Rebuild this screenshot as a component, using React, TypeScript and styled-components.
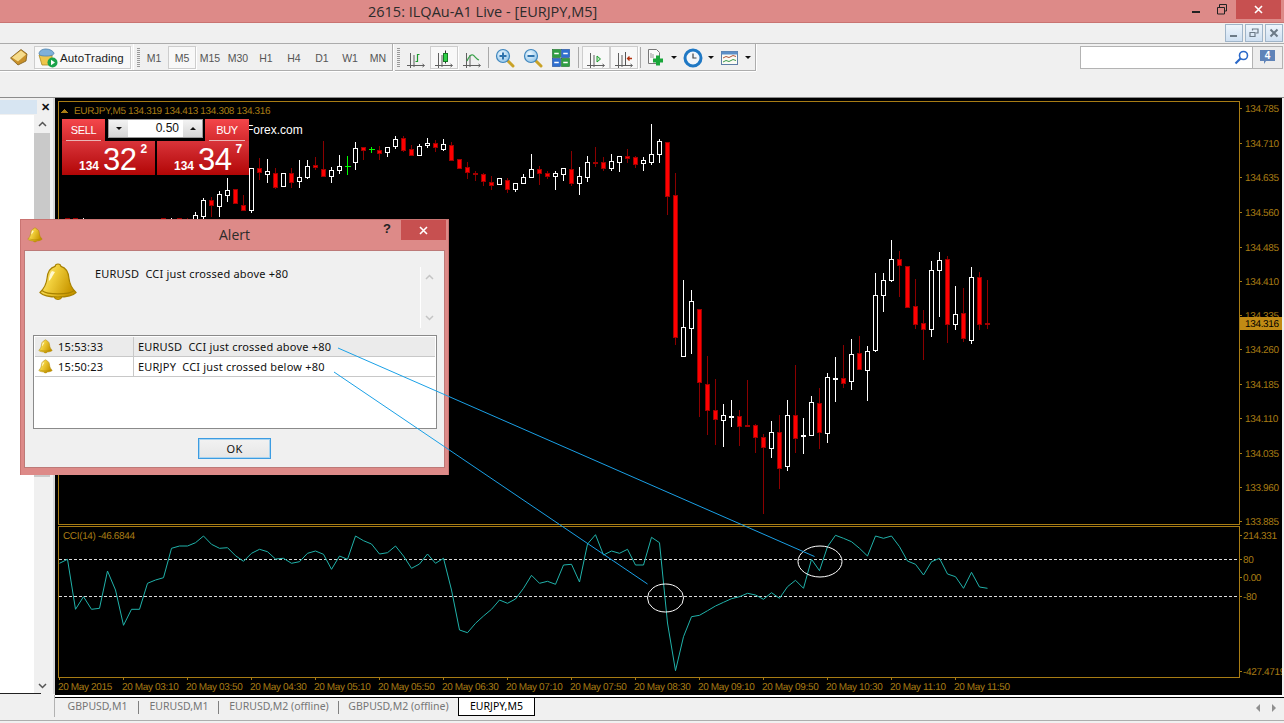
import React from 'react';
import styled, { createGlobalStyle } from 'styled-components';

const UI_FONT = '"Liberation Sans", Arial, sans-serif';
const DIALOG_FONT = '"Noto Sans", "Liberation Sans", sans-serif';
const GOLD = '#a87c14';

const GlobalStyle = createGlobalStyle`
  html, body {
    margin: 0;
    padding: 0;
    background: #f0f0f0;
    overflow: hidden;
  }
  * {
    box-sizing: border-box;
  }
`;

const Page = styled.div`
  position: relative;
  display: flex;
  flex-direction: column;
  width: 1284px;
  height: 723px;
  overflow: hidden;
  background: #f0f0f0;
  font-family: ${UI_FONT};
  font-size: 11px;
`;

/* ---------- title + menu ---------- */

const TitleBar = styled.div`
  display: flex;
  align-items: flex-start;
  justify-content: space-between;
  height: 23px;
  padding-left: 368px;
  background: #dd8a88;
  border-bottom: 1px solid #c97472;
`;

const TitleText = styled.span`
  font-family: 'Open Sans', ${UI_FONT};
  font-size: 14.5px;
  line-height: 23px;
  color: #2b2b2b;
  white-space: pre;
`;

const WindowButtons = styled.div`
  display: flex;
  align-items: flex-start;
  margin-right: 3px;
`;

const CaptionIcon = styled.svg`
  display: block;
  width: 27px;
  height: 19px;
`;

const CloseButton = styled.div`
  display: flex;
  align-items: center;
  justify-content: center;
  width: ${(p: { $w: number }) => p.$w}px;
  height: 19px;
  background: #c75050;
`;

const MenuBar = styled.div`
  display: flex;
  justify-content: flex-end;
  gap: 2px;
  height: 21px;
  padding: 1px 1px 0 0;
  border-bottom: 1px solid #ababab;
`;

const MdiButton = styled.div`
  display: flex;
  align-items: center;
  justify-content: center;
  width: 18px;
  height: 18px;
  border: 1px solid #9fb4c8;
  background: linear-gradient(#eef5fc, #cfe0f2);
`;

/* ---------- toolbars ---------- */

const ToolArea = styled.div`
  display: flex;
  align-items: flex-start;
  height: 54px;
  border-bottom: 1px solid #8c8c8c;
`;

const ToolGroup = styled.div<{ $w: number; $edge?: boolean }>`
  display: flex;
  align-items: center;
  width: ${(p) => p.$w}px;
  height: 27px;
  margin-right: ${(p) => (p.$edge ? 2 : 0)}px;
  border-bottom: 1px solid #adadad;
  border-right: ${(p) => (p.$edge ? '1px solid #adadad' : 'none')};
  box-shadow: 0 1px 0 #fff, 1px 0 0 #fff;
`;

const Grip = styled.div<{ $left: number; $right: number }>`
  flex: none;
  width: 3px;
  height: 19px;
  margin: 0 ${(p) => p.$right}px 0 ${(p) => p.$left}px;
  background: repeating-linear-gradient(#9a9a9a 0 1px, transparent 1px 2px);
`;

const ToolButton = styled.div<{ $active?: boolean; $w?: number }>`
  display: flex;
  align-items: center;
  justify-content: center;
  flex: none;
  width: ${(p) => p.$w ?? 28}px;
  height: 23px;
  margin-top: 1px;
  color: #555;
  font-size: 10.5px;
  border: 1px solid ${(p) => (p.$active ? '#cdcdcd' : 'transparent')};
  background: ${(p) => (p.$active ? '#f8f8f8' : 'transparent')};
  box-shadow: ${(p) => (p.$active ? '1px 1px 0 #fff' : 'none')};
`;

const AutoTradingButton = styled.div`
  display: flex;
  align-items: center;
  gap: 2px;
  width: 97px;
  height: 23px;
  margin: 1px 0 0 5px;
  padding-left: 2px;
  color: #1c1c1c;
  font-size: 11.5px;
  letter-spacing: 0.15px;
  border: 1px solid #cdcdcd;
  background: #f8f8f8;
  box-shadow: 1px 1px 0 #fff;
`;

const ToolSep = styled.div<{ $m: number }>`
  flex: none;
  width: 1px;
  height: 21px;
  margin: 0 ${(p) => p.$m}px;
  background: #a9a9a9;
`;

const Caret = styled.span`
  flex: none;
  width: 0;
  height: 0;
  margin-left: 5px;
  border-left: 3px solid transparent;
  border-right: 3px solid transparent;
  border-top: 3px solid #111;
`;

const IconSvg = styled.svg<{ $size?: number }>`
  display: block;
  flex: none;
  width: ${(p) => p.$size ?? 20}px;
  height: ${(p) => p.$size ?? 20}px;
`;

const SearchWrap = styled.div`
  display: flex;
  margin-left: auto;
  margin-top: 2px;
  margin-right: 1px;
  height: 23px;
`;

const SearchBox = styled.div`
  display: flex;
  align-items: center;
  justify-content: flex-end;
  width: 173px;
  padding-right: 3px;
  background: #fff;
  border: 1px solid #b3b3b3;
`;

const NotifyBox = styled.div`
  display: flex;
  align-items: center;
  justify-content: center;
  width: 30px;
  border: 1px solid #b3b3b3;
  border-left: 0;
  background: #ededed;
`;

/* ---------- main area ---------- */

const Main = styled.div`
  position: relative;
  display: flex;
  height: 597px;
`;

const SidePanel = styled.div`
  display: flex;
  flex-direction: column;
  flex: none;
  width: 55px;
  height: 596px;
  padding-top: 2px;
  border-right: 2px solid #d8d8d8;
`;

const SideHeader = styled.div`
  display: flex;
  align-items: center;
  height: 14px;
`;

const SideHeaderFill = styled.div`
  width: 37px;
  height: 100%;
  background: #d7e5f2;
`;

const SideClose = styled.div`
  flex: 1;
  text-align: center;
  font-size: 11px;
  line-height: 14px;
  font-weight: bold;
  color: #111;
`;

const SideBody = styled.div`
  display: flex;
  flex: 1;
  margin-top: 1px;
  border-bottom: 1px solid #222;
  margin-right: 12px;
`;

const SideList = styled.div`
  width: 34px;
  background: #fff;
`;

const SideScroll = styled.div`
  position: relative;
  flex: 1;
  margin-right: -9px;
  margin-bottom: -1px;
  display: flex;
  flex-direction: column;
  align-items: center;
  padding: 5px 0 4px;
`;

const ScrollThumb = styled.div`
  align-self: stretch;
  height: 344px;
  margin: 4px 0 auto;
  background: #c9c9c9;
`;

const ChartPanel = styled.div`
  position: relative;
  flex: none;
  width: 1227px;
  height: 597px;
  background: #000;
`;

const ChartCanvas = styled.svg`
  display: block;
  width: 100%;
  height: 100%;
  shape-rendering: crispEdges;
`;

const ChartText = styled.text<{ $size?: number }>`
  fill: ${GOLD};
  font-family: ${UI_FONT};
  font-size: ${(p) => p.$size ?? 10}px;
  letter-spacing: -0.35px;
  text-rendering: geometricPrecision;
`;

const BrokerText = styled.text`
  fill: #fff;
  font-family: ${UI_FONT};
  font-size: 12px;
`;

const PriceTagText = styled(ChartText)`
  fill: #000;
`;

/* ---------- one click trading panel ---------- */

const TradePanel = styled.div`
  position: absolute;
  left: 7px;
  top: 21px;
  display: flex;
  flex-direction: column;
  width: 187px;
  color: #fff;
`;

const TradeTop = styled.div`
  display: flex;
  align-items: flex-start;
  height: 22px;
`;

const SideButton = styled.div<{ $w: number }>`
  position: relative;
  display: flex;
  align-items: center;
  justify-content: center;
  width: ${(p) => p.$w}px;
  height: 22px;
  padding-bottom: 1px;
  font-size: 11px;
  letter-spacing: -0.3px;
  background: linear-gradient(#f4474b, #d42a2d);
  &::after {
    content: '';
    position: absolute;
    left: 4px;
    right: 4px;
    bottom: 0;
    height: 1px;
    background: #e9b5b5;
  }
`;

const LotBox = styled.div`
  display: flex;
  width: 95px;
  height: 19px;
  margin: 0 2px 0 3px;
  background: #fff;
  border: 1px solid #9a9a9a;
`;

const LotStep = styled.div`
  display: flex;
  align-items: center;
  justify-content: center;
  width: 19px;
  background: linear-gradient(#f3f3f3, #d6d6d6);
`;

const LotArrow = styled.span<{ $up?: boolean }>`
  width: 0;
  height: 0;
  border-left: 3px solid transparent;
  border-right: 3px solid transparent;
  ${(p) => (p.$up ? 'border-bottom: 3px solid #111;' : 'border-top: 3px solid #111;')}
`;

const LotValue = styled.div`
  flex: 1;
  padding-right: 4px;
  text-align: right;
  line-height: 17px;
  font-size: 12px;
  color: #111;
`;

const PriceRow = styled.div`
  display: flex;
  gap: 2px;
  height: 34px;
`;

const PriceBox = styled.div<{ $w: number }>`
  display: flex;
  align-items: flex-end;
  width: ${(p) => p.$w}px;
  padding: 0 0 1px 17px;
  background: linear-gradient(#d9343a, #b20606);
`;

const PriceSmall = styled.span`
  font-size: 12px;
  font-weight: bold;
  line-height: 16px;
  margin-right: 4px;
`;

const PriceBig = styled.span`
  font-size: 31px;
  line-height: 33px;
  letter-spacing: -0.5px;
  margin-bottom: -2px;
`;

const PriceSup = styled.span`
  align-self: flex-start;
  margin: 1px 0 0 4px;
  font-size: 12px;
  font-weight: bold;
  line-height: 14px;
`;

/* ---------- alert dialog ---------- */

const Dialog = styled.div`
  position: absolute;
  left: 20px;
  top: 219px;
  display: flex;
  flex-direction: column;
  width: 429px;
  height: 256px;
  padding: 0 3px 7px 3px;
  background: #dd8a88;
  border: 1px solid #c97472;
  border-width: 1px 1px 0 1px;
`;

const DialogTitle = styled.div`
  position: relative;
  display: flex;
  align-items: center;
  height: 30px;
  padding-left: 3px;
`;

const DialogTitleText = styled.div`
  position: absolute;
  left: 0;
  right: 0;
  top: 5px;
  text-align: center;
  font-family: 'Open Sans', ${UI_FONT};
  font-size: 14px;
  color: #2b2b2b;
`;

const HelpMark = styled.div`
  position: absolute;
  right: 54px;
  top: 1px;
  font-size: 13px;
  font-weight: bold;
  color: #222;
`;

const DialogClose = styled(CloseButton)`
  position: absolute;
  right: -1px;
  top: 0;
  height: 20px;
`;

const DialogBody = styled.div`
  flex: 1;
  display: flex;
  flex-direction: column;
  background: #f0f0f0;
  border: 1px solid #bd7a78;
  font-family: ${DIALOG_FONT};
  font-size: 11px;
  letter-spacing: 0.2px;
`;

const AlertHead = styled.div`
  display: flex;
  align-items: flex-start;
  height: 84px;
  padding-left: 13px;
`;

const BigBellSlot = styled.div`
  margin-top: 11px;
`;

const MessageText = styled.div`
  flex: 1;
  margin: 15px 0 0 17px;
  color: #111;
  white-space: pre;
`;

const MessageScroll = styled.div`
  display: flex;
  flex-direction: column;
  align-items: center;
  justify-content: space-between;
  width: 24px;
  height: 61px;
  margin: 16px 0 0;
  padding: 6px 6px 6px 0;
  border-left: 1px solid #fff;
`;

const AlertList = styled.div`
  height: 94px;
  margin: 0 7px 0 8px;
  padding: 1px;
  background: #fff;
  border: 1px solid #8a8a8a;
`;

const AlertRow = styled.div<{ $selected?: boolean }>`
  display: flex;
  height: 20px;
  color: #111;
  background: ${(p) => (p.$selected ? '#ebebeb' : '#fff')};
  border-bottom: 1px solid #c8c8c8;
`;

const AlertTime = styled.div`
  display: flex;
  align-items: center;
  gap: 5px;
  width: 99px;
  padding-left: 3px;
  border-right: 1px solid #c8c8c8;
`;

const AlertMessage = styled.div`
  padding-left: 4px;
  line-height: 20px;
  white-space: pre;
`;

const DialogFooter = styled.div`
  flex: 1;
  display: flex;
  justify-content: center;
  padding-top: 9px;
`;

const OkButton = styled.div`
  width: 73px;
  height: 21px;
  text-align: center;
  line-height: 19px;
  color: #111;
  background: linear-gradient(#f2f2f2, #e6e6e6);
  border: 1px solid #3c9ce2;
  box-shadow: inset 0 0 0 1px #a9d4f0;
`;

const CalloutLayer = styled.svg`
  position: absolute;
  left: 0;
  top: 0;
  width: 1284px;
  height: 723px;
  pointer-events: none;
`;

/* ---------- tabs ---------- */

const TabBar = styled.div`
  display: flex;
  height: 22px;
`;

const TabLead = styled.div`
  flex: none;
  width: 55px;
  border-right: 1px solid #b2b2b2;
`;

const Tabs = styled.div`
  flex: 1;
  display: flex;
  align-items: flex-start;
  margin-top: 2px;
  border-top: 1px solid #000;
  box-shadow: 0 -2px 0 #fff;
  padding: 0 8px 0 1px;
`;

const Tab = styled.div<{ $w: number; $active?: boolean; $sep?: boolean }>`
  position: relative;
  width: ${(p) => p.$w}px;
  height: 18px;
  text-align: center;
  line-height: 17px;
  white-space: pre;
  font-family: ${DIALOG_FONT};
  font-size: 10.5px;
  color: ${(p) => (p.$active ? '#000' : '#767676')};
  background: ${(p) => (p.$active ? '#fff' : 'transparent')};
  border: ${(p) => (p.$active ? '1px solid #000' : 'none')};
  border-top: none;
  &::after {
    content: '';
    display: ${(p) => (p.$sep ? 'block' : 'none')};
    position: absolute;
    right: 0;
    top: 3px;
    height: 13px;
    width: 1px;
    background: #808080;
  }
`;

const TabArrows = styled.div`
  display: flex;
  gap: 12px;
  align-self: center;
  margin-left: auto;
`;

const TabArrow = styled.span<{ $right?: boolean }>`
  width: 0;
  height: 0;
  border-top: 4px solid transparent;
  border-bottom: 4px solid transparent;
  ${(p) => (p.$right ? 'border-left: 4px solid #8f8f8f;' : 'border-right: 4px solid #8f8f8f;')}
`;

const StatusBar = styled.div`
  flex: 1;
  margin-top: 3px;
  border-top: 1px solid #adadad;
`;

/* ---------- data, in page pixels ---------- */

type Candle = [x: number, high: number, low: number, top: number, bottom: number, kind: 'w' | 'r' | 'g'];

const candles: Candle[] = [
  [67.5, 218, 226, 218, 226, 'r'], [75.5, 218, 226, 218, 226, 'r'], [83.5, 218, 226, 226, 226, 'w'],
  [163.5, 218, 226, 218, 226, 'r'], [171.5, 218, 226, 226, 226, 'w'], [179.5, 218, 226, 218, 226, 'r'],
  [187.5, 218, 226, 226, 226, 'r'], [195.5, 212, 225, 215, 225, 'w'], [203.5, 198, 225, 200, 217, 'w'],
  [211.5, 197, 217, 200, 206, 'r'], [219.5, 191, 217, 194, 207, 'w'], [227.5, 178, 202, 190, 196, 'w'],
  [235.5, 189, 204, 189, 204, 'r'], [243.5, 195, 211, 205, 211, 'r'], [251.5, 168, 213, 168, 211, 'w'],
  [259.5, 158, 180, 168, 173, 'r'], [267.5, 159, 183, 171, 175, 'w'], [275.5, 168, 189, 173, 188, 'r'],
  [283.5, 173, 187, 173, 187, 'w'], [291.5, 168, 188, 173, 183, 'r'], [299.5, 160, 188, 177, 182, 'w'],
  [307.5, 160, 179, 166, 178, 'w'], [315.5, 157, 170, 165, 168, 'r'], [323.5, 141, 177, 169, 177, 'r'],
  [331.5, 167, 183, 170, 177, 'w'], [339.5, 155, 174, 166, 171, 'w'], [347.5, 156, 175, 166, 167, 'g'],
  [355.5, 142, 170, 148, 163, 'w'], [363.5, 147, 160, 147, 151, 'r'], [371.5, 147, 153, 149, 150, 'g'],
  [379.5, 146, 160, 150, 154, 'r'], [387.5, 147, 157, 147, 153, 'w'], [395.5, 136, 149, 139, 147, 'w'],
  [403.5, 136, 152, 138, 151, 'r'], [411.5, 145, 156, 149, 156, 'r'], [419.5, 144, 156, 146, 156, 'w'],
  [427.5, 138, 148, 143, 146, 'w'], [435.5, 140, 152, 143, 148, 'r'], [443.5, 139, 151, 144, 150, 'w'],
  [451.5, 142, 161, 145, 161, 'r'], [459.5, 159, 169, 159, 169, 'r'], [467.5, 162, 179, 167, 173, 'r'],
  [475.5, 171, 181, 173, 175, 'r'], [483.5, 173, 186, 174, 182, 'r'], [491.5, 176, 190, 182, 186, 'r'],
  [499.5, 178, 185, 178, 185, 'w'], [507.5, 178, 193, 180, 190, 'r'], [515.5, 183, 192, 183, 190, 'w'],
  [523.5, 174, 184, 177, 184, 'w'], [531.5, 154, 178, 169, 178, 'w'], [539.5, 166, 185, 169, 174, 'r'],
  [547.5, 171, 179, 173, 177, 'r'], [555.5, 171, 190, 173, 177, 'w'], [563.5, 168, 181, 168, 175, 'w'],
  [571.5, 151, 186, 169, 184, 'r'], [579.5, 167, 195, 176, 184, 'w'], [587.5, 156, 182, 162, 178, 'w'],
  [595.5, 147, 167, 162, 164, 'r'], [603.5, 157, 171, 162, 169, 'r'], [611.5, 154, 171, 161, 169, 'w'],
  [619.5, 156, 172, 156, 163, 'w'], [627.5, 149, 163, 156, 159, 'r'], [635.5, 156, 168, 157, 165, 'r'],
  [643.5, 157, 171, 160, 164, 'w'], [651.5, 124, 165, 154, 163, 'w'], [659.5, 139, 163, 141, 155, 'w'],
  [667.5, 142, 215, 142, 197, 'r'], [675.5, 173, 345, 195, 338, 'r'], [683.5, 280, 357, 327, 357, 'w'],
  [691.5, 290, 354, 301, 329, 'w'], [699.5, 309, 417, 309, 383, 'r'], [707.5, 356, 435, 384, 411, 'r'],
  [715.5, 379, 445, 410, 420, 'r'], [723.5, 404, 447, 415, 421, 'w'], [731.5, 400, 427, 416, 418, 'w'],
  [739.5, 410, 446, 416, 427, 'r'], [747.5, 380, 427, 425, 427, 'r'], [755.5, 424, 453, 425, 438, 'r'],
  [763.5, 434, 514, 437, 448, 'r'], [771.5, 421, 458, 432, 449, 'w'], [779.5, 415, 489, 432, 469, 'r'],
  [787.5, 400, 471, 415, 467, 'w'], [795.5, 365, 453, 415, 439, 'r'], [803.5, 418, 454, 435, 437, 'w'],
  [811.5, 396, 436, 402, 436, 'w'], [819.5, 388, 449, 403, 433, 'r'], [827.5, 373, 443, 377, 434, 'w'],
  [835.5, 357, 402, 378, 380, 'w'], [843.5, 345, 388, 378, 384, 'r'], [851.5, 339, 390, 354, 382, 'w'],
  [859.5, 336, 370, 353, 370, 'r'], [867.5, 346, 401, 351, 371, 'w'], [875.5, 273, 352, 295, 351, 'w'],
  [883.5, 273, 312, 280, 296, 'w'], [891.5, 240, 282, 259, 281, 'w'], [899.5, 251, 297, 259, 266, 'r'],
  [907.5, 266, 308, 266, 308, 'r'], [915.5, 279, 329, 306, 325, 'r'], [923.5, 310, 360, 323, 330, 'r'],
  [931.5, 261, 337, 270, 330, 'w'], [939.5, 252, 317, 260, 271, 'w'], [947.5, 256, 343, 259, 325, 'r'],
  [955.5, 286, 330, 314, 325, 'w'], [963.5, 288, 342, 313, 339, 'r'], [971.5, 267, 344, 277, 341, 'w'],
  [979.5, 272, 330, 277, 325, 'r'], [987.5, 280, 329, 323, 325, 'r'],
];

// one value per bar from x = 59.5, in px below y = 520
const cciLine = [
  43.3, 39.3, 89.3, 76.7, 89.3, 88.3, 51, 70, 105.3, 89.3, 89.3, 63.3, 60, 57.7, 28.3, 26, 26, 22.7, 16, 24.3, 28.3, 27.7,
  35.7, 41.3, 33.3, 29.3, 31.7, 39, 38.3, 43.3, 41.7, 33.3, 31, 34.3, 49.3, 36, 39.3, 16, 20.7, 24, 34, 32.7, 26, 36, 48.3,
  44, 34, 43.3, 38.3, 70, 110, 112.7, 103.3, 96, 89.3, 80, 83.3, 79, 68.3, 55.3, 63.3, 61.3, 64.3, 45, 44.3, 62, 24, 14.7,
  35, 31, 33.3, 29.3, 45, 45, 17.3, 22.7, 103, 150.7, 116.7, 96.7, 95.3, 90.7, 86, 82.3, 78.7, 76.7, 73.3, 75, 79.3, 72.7,
  78.3, 66.7, 60.3, 68.3, 39.3, 50.7, 26.7, 15.3, 18.3, 21.7, 28.3, 36, 16, 18.3, 16, 26.7, 41, 44.3, 55, 41.7, 38.3, 54,
  56.7, 68.3, 52.3, 67, 68.3,
];

const priceLabels: [string, number][] = [
  ['134.785', 108], ['134.710', 143], ['134.635', 177], ['134.560', 212], ['134.485', 247], ['134.410', 281],
  ['134.335', 315], ['134.260', 349], ['134.185', 384], ['134.110', 418], ['134.035', 453], ['133.960', 487],
  ['133.885', 521],
];

const cciLabels: [string, number][] = [['214.331', 535], ['80', 559], ['0.00', 577], ['-80', 596], ['-427.4719', 671]];

const timeLabels = [
  '20 May 2015', '20 May 03:10', '20 May 03:50', '20 May 04:30', '20 May 05:10', '20 May 05:50', '20 May 06:30', '20 May 07:10',
  '20 May 07:50', '20 May 08:30', '20 May 09:10', '20 May 09:50', '20 May 10:30', '20 May 11:10', '20 May 11:50',
];

const timeframes = ['M1', 'M5', 'M15', 'M30', 'H1', 'H4', 'D1', 'W1', 'MN'];

const tabs = [
  { label: 'GBPUSD,M1', w: 83, sep: true },
  { label: 'EURUSD,M1', w: 80, sep: true },
  { label: 'EURUSD,M2 (offline)', w: 120, sep: true },
  { label: 'GBPUSD,M2 (offline)', w: 119 },
  { label: 'EURJPY,M5', w: 77, active: true },
];

/* ---------- icons ---------- */

function Bell({ id, size }: { id: string; size: number }) {
  return (
    <IconSvg $size={size} viewBox="0 0 40 40">
      <defs>
        <linearGradient id={id} x1="0" x2="1" y1="0" y2="0.4">
          <stop offset="0" stopColor="#fff3a6" />
          <stop offset="0.45" stopColor="#f1cf3c" />
          <stop offset="1" stopColor="#c99700" />
        </linearGradient>
      </defs>
      <path d="M16 34a4 3.500 0 0 0 8 0z" fill="#d9a800" stroke="#a67f00" />
      <path
        d="M20 2c-1.800 0-2.800 1-2.900 2.400C11 6 9.500 11 9 16.500c-.5 5-2.500 9.500-7 14 3 3.200 10.500 4.500 18 4.500s15-1.300 18-4.500c-4.500-4.500-6.500-9-7-14C30.500 11 29 6 22.900 4.400 22.800 3 21.800 2 20 2z"
        fill={`url(#${id})`}
        stroke="#a88200"
        strokeWidth="1.200"
      />
      <path d="M4 28.500c5 4.500 27 4.500 32 0" fill="none" stroke="#a88200" strokeWidth="1.200" />
      <path d="M14 9c-2 2-3 6-3.200 10 2-1 3.500-5 6.200-9z" fill="#fff8cf" />
    </IconSvg>
  );
}

function Axes() {
  return (
    <path
      d="M4.500 5v15M8 7v12M1 17.500h17M16.500 16l2 1.500-2 1.500"
      fill="none"
      stroke="#5f5f5f"
      strokeWidth="1"
    />
  );
}

function Magnifier({ id, plus }: { id: string; plus?: boolean }) {
  return (
    <IconSvg viewBox="0 0 20 20">
      <defs>
        <radialGradient id={id} cx="0.4" cy="0.35" r="0.7">
          <stop offset="0" stopColor="#eef8ff" />
          <stop offset="1" stopColor="#8ec3e8" />
        </radialGradient>
      </defs>
      <path d="M12 12l6 6" stroke="#c9a227" strokeWidth="3" strokeLinecap="round" />
      <circle cx="8" cy="8" r="6.500" fill={`url(#${id})`} stroke="#3f86bd" strokeWidth="1.200" />
      <path d={plus ? 'M4.500 8h7M8 4.500v7' : 'M4.500 8h7'} stroke="#2f73ad" strokeWidth="2" />
    </IconSvg>
  );
}

function AutoTradingIcon() {
  return (
    <IconSvg $size={21} viewBox="0 0 21 21">
      <path d="M2 8h13v10H5z" fill="#eec64a" stroke="#a98a25" strokeWidth=".8" />
      <path d="M2 7c0-3 3-5 7-5s7 2 8 4c0 2-3 3-7 3S3 9 2 7z" fill="#7fb0d8" stroke="#4f83ad" strokeWidth=".8" />
      <circle cx="15.500" cy="15.500" r="5" fill="#1aa34a" />
      <path d="M14 12.800l4 2.700-4 2.700z" fill="#fff" />
    </IconSvg>
  );
}

export default function App() {
  return (
    <Page>
      <GlobalStyle />

      <TitleBar>
        <TitleText>2615: ILQAu-A1 Live - [EURJPY,M5]</TitleText>
        <WindowButtons>
          <CaptionIcon viewBox="0 0 27 19">
            <rect x="10" y="11" width="8" height="2" fill="#222" />
          </CaptionIcon>
          <CaptionIcon viewBox="0 0 27 19">
            <path d="M8.500 7.500h7v6.500h-7zM10.500 7V4.500h7V11H16" fill="none" stroke="#222" strokeWidth="1" />
          </CaptionIcon>
          <CloseButton $w={45}>
            <IconSvg $size={9} viewBox="0 0 9 9">
              <path d="M1 1l7 7M8 1L1 8" stroke="#fff" strokeWidth="1.600" />
            </IconSvg>
          </CloseButton>
        </WindowButtons>
      </TitleBar>

      <MenuBar>
        <MdiButton>
          <IconSvg $size={10} viewBox="0 0 10 10">
            <rect x="1" y="7" width="7" height="2" fill="#6c7a87" />
          </IconSvg>
        </MdiButton>
        <MdiButton>
          <IconSvg $size={10} viewBox="0 0 10 10">
            <path d="M1 4.500h5v4H1zM3.500 2.500V1h5.500v4H7" fill="none" stroke="#6c7a87" strokeWidth="1.200" />
          </IconSvg>
        </MdiButton>
        <MdiButton>
          <IconSvg $size={10} viewBox="0 0 10 10">
            <path d="M1.500 1.500l7 7M8.500 1.500l-7 7" stroke="#6c7a87" strokeWidth="2" />
          </IconSvg>
        </MdiButton>
      </MenuBar>

      <ToolArea>
        <ToolGroup $w={133}>
          <IconSvg viewBox="0 0 20 20" style={{ marginLeft: 9 }}>
            <path d="M1.500 11L12 2.500l6 4.500-1 7-8 4z" fill="#c8902a" stroke="#7d5c18" strokeWidth=".8" />
            <path d="M3 10.500l9-7 5 4-8 7z" fill="#f6dc8c" />
          </IconSvg>
          <AutoTradingButton>
            <AutoTradingIcon />
            AutoTrading
          </AutoTradingButton>
        </ToolGroup>
        <ToolGroup $w={260} $edge>
          <Grip $left={4} $right={0} />
          {timeframes.map((tf) => (
            <ToolButton key={tf} $active={tf === 'M5'}>
              {tf}
            </ToolButton>
          ))}
        </ToolGroup>
        <ToolGroup $w={361} $edge>
          <Grip $left={2} $right={2} />
          <ToolButton>
            <IconSvg viewBox="0 0 20 20">
              <Axes />
              <path d="M11.500 6v8M11.500 6.500h2M11.500 13.500H9.500" stroke="#1c9a2e" strokeWidth="1.200" fill="none" />
            </IconSvg>
          </ToolButton>
          <ToolButton $active>
            <IconSvg viewBox="0 0 20 20">
              <Axes />
              <path d="M11.500 2.500v13" stroke="#333" />
              <rect x="9.500" y="5.500" width="4" height="8" fill="#2fd047" stroke="#167a26" />
            </IconSvg>
          </ToolButton>
          <ToolButton>
            <IconSvg viewBox="0 0 20 20">
              <Axes />
              <path d="M5 13C7 8.500 9 6 11 7c2 1 3 4 6 5" fill="none" stroke="#3aa14a" strokeWidth="1.200" />
            </IconSvg>
          </ToolButton>
          <ToolSep $m={2} />
          <ToolButton>
            <Magnifier id="zoomIn" plus />
          </ToolButton>
          <ToolButton>
            <Magnifier id="zoomOut" />
          </ToolButton>
          <ToolButton>
            <IconSvg $size={18} viewBox="0 0 16 16">
              <rect x="0.500" y="0.500" width="7" height="7" fill="#2f9e44" stroke="#20752f" strokeWidth=".6" />
              <rect x="8.500" y="0.500" width="7" height="7" fill="#2f6fd0" stroke="#20509c" strokeWidth=".6" />
              <rect x="0.500" y="8.500" width="7" height="7" fill="#2f6fd0" stroke="#20509c" strokeWidth=".6" />
              <rect x="8.500" y="8.500" width="7" height="7" fill="#2f9e44" stroke="#20752f" strokeWidth=".6" />
              <path d="M2 4h4M10 4h4M2 12h4M10 12h4" stroke="#fff" strokeWidth="1.500" />
            </IconSvg>
          </ToolButton>
          <ToolSep $m={3} />
          <ToolButton $active>
            <IconSvg viewBox="0 0 20 20">
              <Axes />
              <path d="M11 8l3.500 3L11 14z" fill="#bdecbf" stroke="#1c9a2e" strokeWidth="1" />
            </IconSvg>
          </ToolButton>
          <ToolButton $active>
            <IconSvg viewBox="0 0 20 20">
              <Axes />
              <path d="M11.500 4v14" stroke="#555" />
              <path d="M18 10.500h-4M15.500 8.500l-2 2 2 2" fill="none" stroke="#b3310f" strokeWidth="1.300" />
            </IconSvg>
          </ToolButton>
          <ToolSep $m={2} />
          <ToolButton $w={37}>
            <IconSvg viewBox="0 0 20 20">
              <path d="M2.500 1.500h8l3 3v11h-11z" fill="#fafafa" stroke="#777" />
              <path d="M5 5v5M7 6v4" stroke="#999" />
              <path d="M12 7.500v10M7 12.500h10" stroke="#19a63a" strokeWidth="4" />
            </IconSvg>
            <Caret />
          </ToolButton>
          <ToolButton $w={37}>
            <IconSvg viewBox="0 0 20 20">
              <circle cx="10" cy="10" r="8" fill="#f2f6fa" stroke="#1f78c4" strokeWidth="3" />
              <path d="M10 5.500V10h3.500" fill="none" stroke="#444" strokeWidth="1.200" />
            </IconSvg>
            <Caret />
          </ToolButton>
          <ToolButton $w={37}>
            <IconSvg viewBox="0 0 20 20">
              <rect x="1.500" y="3.500" width="16" height="13" fill="#fbfbf4" stroke="#5d7ea6" />
              <rect x="1.500" y="3.500" width="16" height="3" fill="#5d8fc7" />
              <path d="M3 10l3-1.500 3 1 4-2 3 1" fill="none" stroke="#b2553a" />
              <path d="M3 14l3-1.500 3 1 4-2 3 1" fill="none" stroke="#3a9a4a" />
            </IconSvg>
            <Caret />
          </ToolButton>
        </ToolGroup>
        <SearchWrap>
          <SearchBox>
            <IconSvg $size={15} viewBox="0 0 15 15">
              <circle cx="9.500" cy="5.500" r="4" fill="none" stroke="#2a68c8" strokeWidth="1.600" />
              <path d="M6.500 8.500L1.500 13.500" stroke="#2a68c8" strokeWidth="2.200" />
            </IconSvg>
          </SearchBox>
          <NotifyBox>
            <IconSvg $size={17} viewBox="0 0 17 17">
              <path d="M1 1h15v11H7l-2 3v-3H1z" fill="#5f83b8" />
              <text x="8.500" y="10" textAnchor="middle" fontFamily={UI_FONT} fontSize="10" fontWeight="bold" fill="#fff">
                4
              </text>
            </IconSvg>
          </NotifyBox>
        </SearchWrap>
      </ToolArea>

      <Main>
        <SidePanel>
          <SideHeader>
            <SideHeaderFill />
            <SideClose>✕</SideClose>
          </SideHeader>
          <SideBody>
            <SideList />
            <SideScroll>
              <IconSvg $size={9} viewBox="0 0 9 9">
                <path d="M1 6l3.500-3.500L8 6" fill="none" stroke="#555" strokeWidth="1.500" />
              </IconSvg>
              <ScrollThumb />
              <IconSvg $size={9} viewBox="0 0 9 9">
                <path d="M1 3l3.500 3.500L8 3" fill="none" stroke="#555" strokeWidth="1.500" />
              </IconSvg>
            </SideScroll>
          </SideBody>
        </SidePanel>

        <ChartPanel>
          <ChartCanvas viewBox="55 98 1227 597">
            <path
              d="M58.500 101.500H1239.500V524.500H58.500ZM58.500 526.500H1239.500V677.500H58.500Z"
              fill="none"
              stroke={GOLD}
            />
            {priceLabels.map(([, y]) => (
              <path key={y} d={`M1239 ${y + 0.5}h3`} stroke={GOLD} />
            ))}
            {cciLabels.map(([, y]) => (
              <path key={y} d={`M1239 ${y + 0.5}h3`} stroke={GOLD} />
            ))}
            {timeLabels.map((_, i) => (
              <path key={i} d={`M${59.5 + i * 64} 677v3`} stroke={GOLD} />
            ))}

            <path d="M61 113l3.500-4 3.500 4z" fill={GOLD} />
            <ChartText x="74" y="113.500">
              EURJPY,M5  134.319 134.413 134.308 134.316
            </ChartText>
            <BrokerText x="246" y="133.500">
              Forex.com
            </BrokerText>

            {candles.map(([x, high, low, top, bottom, kind]) => {
              const wick = kind === 'w' ? '#fff' : kind === 'g' ? '#00ff00' : '#8b0000';
              return (
                <g key={x}>
                  <path d={`M${x} ${high}V${low}`} stroke={wick} />
                  {kind === 'g' ? (
                    <path d={`M${x - 3} ${top + 0.5}h6`} stroke="#00ff00" />
                  ) : (
                    <rect
                      x={x - 2}
                      y={top + 0.5}
                      width={4}
                      height={Math.max(bottom - top - 1, 0.5)}
                      fill={kind === 'w' ? '#000' : '#f00'}
                      stroke={kind === 'w' ? '#fff' : '#a00000'}
                    />
                  )}
                </g>
              );
            })}

            {priceLabels.map(([label, y]) => (
              <ChartText key={label} x="1245" y={y + 3.500}>
                {label}
              </ChartText>
            ))}
            <rect x="1240" y="317" width="42" height="13" fill="#c08a14" />
            <PriceTagText x="1245" y="327">
              134.316
            </PriceTagText>

            <ChartText x="63" y="538.500">
              CCI(14) -46.6844
            </ChartText>
            <path d="M59 559.500H1239M59 596.500H1239" stroke="#dcdcdc" strokeDasharray="3 2" />
            <polyline
              points={cciLine.map((v, i) => `${59.5 + i * 8},${520 + v}`).join(' ')}
              fill="none"
              stroke="#20b2aa"
              style={{ shapeRendering: 'auto' }}
            />
            <g fill="none" stroke="#fff" style={{ shapeRendering: 'auto' }}>
              <ellipse cx="665.500" cy="598" rx="18" ry="14" />
              <ellipse cx="820" cy="561.500" rx="22" ry="15.500" />
            </g>
            {cciLabels.map(([label, y]) => (
              <ChartText key={label} x="1243" y={y + 3.500}>
                {label}
              </ChartText>
            ))}
            {timeLabels.map((label, i) => (
              <ChartText key={label} x={58 + i * 64} y="690">
                {label}
              </ChartText>
            ))}
          </ChartCanvas>

          <TradePanel>
            <TradeTop>
              <SideButton $w={43}>SELL</SideButton>
              <LotBox>
                <LotStep>
                  <LotArrow />
                </LotStep>
                <LotValue>0.50</LotValue>
                <LotStep>
                  <LotArrow $up />
                </LotStep>
              </LotBox>
              <SideButton $w={44}>BUY</SideButton>
            </TradeTop>
            <PriceRow>
              <PriceBox $w={93}>
                <PriceSmall>134</PriceSmall>
                <PriceBig>32</PriceBig>
                <PriceSup>2</PriceSup>
              </PriceBox>
              <PriceBox $w={92}>
                <PriceSmall>134</PriceSmall>
                <PriceBig>34</PriceBig>
                <PriceSup>7</PriceSup>
              </PriceBox>
            </PriceRow>
          </TradePanel>
        </ChartPanel>
      </Main>

      <TabBar>
        <TabLead />
        <Tabs>
          {tabs.map((tab) => (
            <Tab key={tab.label} $w={tab.w} $active={tab.active} $sep={tab.sep}>
              {tab.label}
            </Tab>
          ))}
          <TabArrows>
            <TabArrow />
            <TabArrow $right />
          </TabArrows>
        </Tabs>
      </TabBar>
      <StatusBar />

      <Dialog>
        <DialogTitle>
          <Bell id="bellTitle" size={16} />
          <DialogTitleText>Alert</DialogTitleText>
          <HelpMark>?</HelpMark>
          <DialogClose $w={45}>
            <IconSvg $size={9} viewBox="0 0 9 9">
              <path d="M1 1l7 7M8 1L1 8" stroke="#fff" strokeWidth="1.600" />
            </IconSvg>
          </DialogClose>
        </DialogTitle>
        <DialogBody>
          <AlertHead>
            <BigBellSlot>
              <Bell id="bellBig" size={40} />
            </BigBellSlot>
            <MessageText>EURUSD  CCI just crossed above +80</MessageText>
            <MessageScroll>
              <IconSvg $size={9} viewBox="0 0 9 9">
                <path d="M1 6l3.500-3.500L8 6" fill="none" stroke="#c4c4c4" strokeWidth="1.500" />
              </IconSvg>
              <IconSvg $size={9} viewBox="0 0 9 9">
                <path d="M1 3l3.500 3.500L8 3" fill="none" stroke="#c4c4c4" strokeWidth="1.500" />
              </IconSvg>
            </MessageScroll>
          </AlertHead>
          <AlertList>
            <AlertRow $selected>
              <AlertTime>
                <Bell id="bellRowOne" size={15} />
                15:53:33
              </AlertTime>
              <AlertMessage>EURUSD  CCI just crossed above +80</AlertMessage>
            </AlertRow>
            <AlertRow>
              <AlertTime>
                <Bell id="bellRowTwo" size={15} />
                15:50:23
              </AlertTime>
              <AlertMessage>EURJPY  CCI just crossed below +80</AlertMessage>
            </AlertRow>
          </AlertList>
          <DialogFooter>
            <OkButton>OK</OkButton>
          </DialogFooter>
        </DialogBody>
      </Dialog>

      <CalloutLayer viewBox="0 0 1284 723">
        <path d="M338 348L814.500 556.500M334 372L647.500 584" fill="none" stroke="#1aa0e6" strokeWidth="1" />
      </CalloutLayer>
    </Page>
  );
}
